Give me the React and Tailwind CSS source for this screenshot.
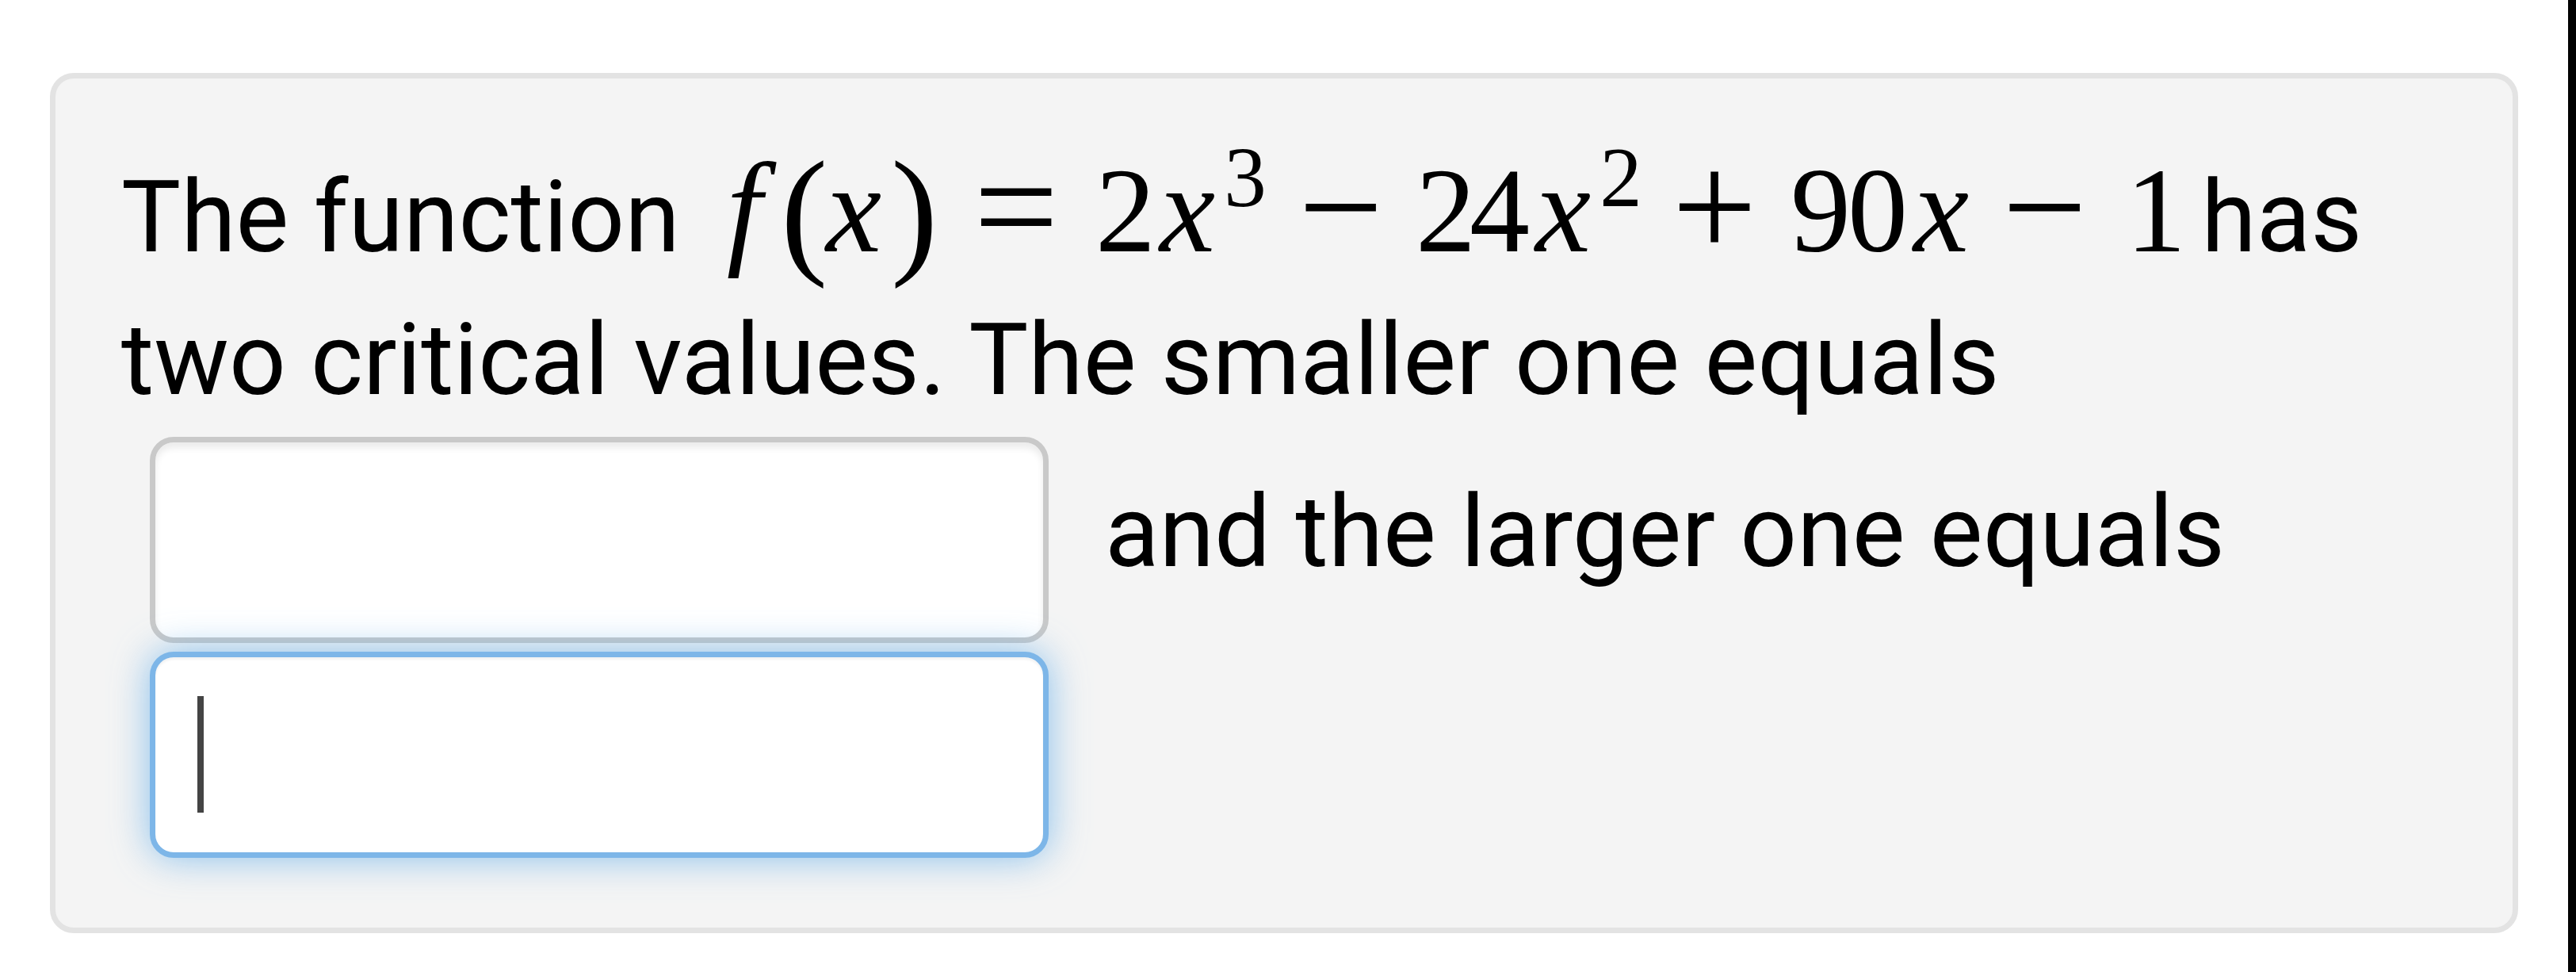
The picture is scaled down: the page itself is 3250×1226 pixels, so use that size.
import React from 'react';

// one glyph of the formula, in a fixed box so the spacing does not depend on font metrics;
// leading 0 keeps the big glyphs from stretching the line box
function G({ className = '', children }) {
  return <span className={`inline-block text-center leading-[0] ${className}`}>{children}</span>;
}

function Formula() {
  return (
    <span className="whitespace-nowrap font-['Liberation_Serif',serif] text-[152px] leading-[0] text-black">
      <G className="ml-[5px] w-[90px] text-[160px] italic">f</G>
      <G className="ml-[1px] w-[50px] align-[-9px] text-[178px]">(</G>
      <G className="ml-[2px] w-[80px] text-[158px] italic">x</G>
      <G className="ml-[7px] w-[50px] align-[-9px] text-[178px]">)</G>
      <G className="ml-[53px] w-[110px] align-[-8px] text-[190px]">=</G>
      <G className="ml-[45px] w-[70px]">2</G>
      <G className="ml-[6px] w-[80px] text-[158px] italic">x</G>
      <G className="ml-[3px] w-[60px] align-[57px] text-[107px]">3</G>
      <G className="ml-[37px] w-[100px] align-[-8px] text-[190px]">−</G>
      <G className="ml-[48px] w-[64px]">2</G>
      <G className="ml-[4px] w-[64px]">4</G>
      <G className="ml-[14px] w-[80px] text-[158px] italic">x</G>
      <G className="ml-[3px] w-[60px] align-[57px] text-[107px]">2</G>
      <G className="ml-[33px] w-[110px] align-[-8px] text-[190px]">+</G>
      <G className="ml-[41px] w-[66px]">9</G>
      <G className="ml-[6px] w-[66px]">0</G>
      <G className="ml-[12px] w-[80px] text-[158px] italic">x</G>
      <G className="ml-[37px] w-[100px] align-[-8px] text-[190px]">−</G>
      <G className="ml-[56px] w-[64px]">1</G>
    </span>
  );
}

export default function App() {
  return (
    <div className="flex h-[1226px] w-[3250px] bg-white font-['Roboto',sans-serif] text-black">
      <main className="flex-1 px-[63px] pt-[92px]">
        <div className="rounded-[30px] border-[7px] border-[#e3e3e3] bg-[#f4f4f4] pb-[88px] pl-[83px] pr-[40px] pt-[85px]">
          <p className="text-[126px] leading-[180px]">
            The function <Formula /> has
            <br />
            two critical values. The smaller one equals
          </p>

          <div className="mt-[7px] flex items-start gap-[71px] pl-[36px]">
            <input
              type="text"
              readOnly
              aria-label="smaller critical value"
              className="h-[260px] w-[1134px] rounded-[30px] border-[7px] border-[#c9c9c9] bg-white px-[50px] text-[126px] shadow-[inset_0_7px_9px_rgba(0,0,0,0.08)] outline-none"
            />
            <span className="mt-[30px] text-[126px] leading-[180px]">and the larger one equals</span>
          </div>

          <div className="relative ml-[36px] mt-[11px] h-[260px] w-[1134px]">
            <input
              type="text"
              readOnly
              aria-label="larger critical value"
              className="h-full w-full rounded-[30px] border-[7px] border-[#7db6e8] bg-white px-[50px] text-[126px] shadow-[inset_0_3px_3px_rgba(0,0,0,0.05),0_0_48px_rgba(102,175,233,0.75)] outline-none"
            />
            {/* text caret */}
            <span className="absolute left-[60px] top-[56px] h-[147px] w-[8px] bg-[#444]" />
          </div>
        </div>
      </main>
      <div className="w-[10px] bg-black" />
    </div>
  );
}
